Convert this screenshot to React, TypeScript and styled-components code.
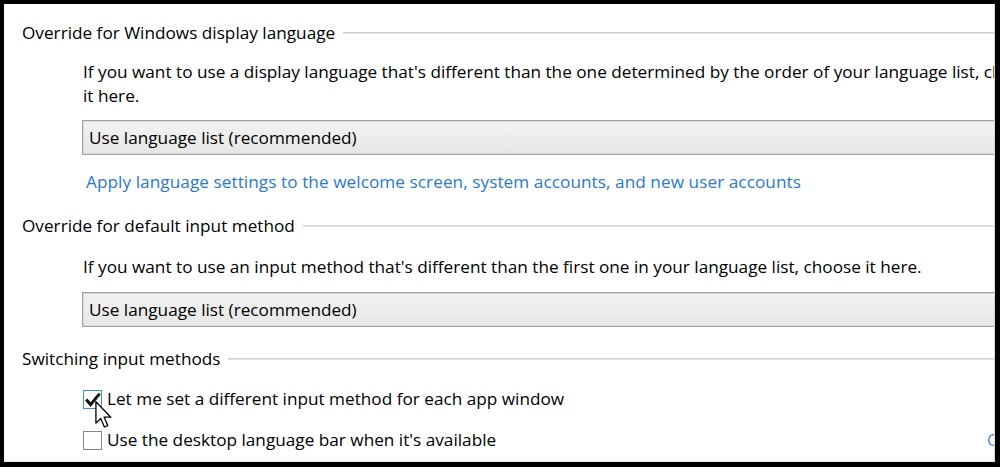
import React from 'react';
import styled, { createGlobalStyle } from 'styled-components';

const GlobalStyle = createGlobalStyle`
	html, body {
		margin: 0;
		padding: 0;
		background: #000;
	}
	* {
		box-sizing: border-box;
	}
`;

const Frame = styled.div`
	width: 1000px;
	height: 467px;
	background: #000;
	padding: 4px 5px 5px 4px;
`;

const Viewport = styled.div`
	position: relative;
	height: 100%;
	background: #fff;
	overflow: hidden;
	border-right: 1px solid #d6d6d6;
	border-bottom: 1px solid #ececec;
`;

const Panel = styled.div`
	width: 1080px;
	padding: 17px 0 0 18px;
	font-family: 'Open Sans', 'Noto Sans', sans-serif;
	font-size: 17.2px;
	line-height: 24px;
	color: #000;
`;

const HeadingRow = styled.div<{ $gap: number }>`
	display: flex;
	align-items: center;
	gap: 8px;
	margin-top: ${p => p.$gap}px;
	white-space: nowrap;
`;

const Rule = styled.div`
	flex: 1;
	height: 2px;
	background: #e2e2e2;
	border-top: 1px solid #d2d2d2;
`;

const Indent = styled.div`
	margin-left: 61px;
`;

const Para = styled.p<{ $gap: number }>`
	margin: ${p => p.$gap}px 0 0 0;
	white-space: nowrap;
`;

const Select = styled.div<{ $gap: number }>`
	display: flex;
	align-items: center;
	height: 35px;
	margin: ${p => p.$gap}px 0 0 -1px;
	padding-left: 6px;
	border: 1px solid #a3a3a3;
	box-shadow: inset 0 0 0 1px #d8d8d8;
	background: linear-gradient(#f3f3f3, #e6e6e6);
	white-space: nowrap;
`;

const Link = styled.a<{ $gap: number }>`
	display: block;
	margin: ${p => p.$gap}px 0 0 3px;
	color: #2a78d6;
	text-decoration: none;
	white-space: nowrap;
	letter-spacing: 0.06px;
	cursor: pointer;
`;

const CheckRow = styled.label<{ $gap: number }>`
	position: relative;
	display: flex;
	align-items: center;
	gap: 5px;
	width: 974px;
	margin-top: ${p => p.$gap}px;
	white-space: nowrap;
`;

const Box = styled.span<{ $focused?: boolean }>`
	display: inline-flex;
	width: 19px;
	height: 19px;
	flex: none;
	background: #fff;
	border: 1px solid ${p => (p.$focused ? '#3d8ee6' : '#858585')};
`;

const SideLink = styled.span`
	width: 70px;
	margin-left: auto;
	color: #5b86c8;
`;

const Pointer = styled.svg`
	position: absolute;
	left: 12px;
	top: 14px;
	width: 17px;
	height: 27px;
	pointer-events: none;
`;

function Heading({ title, gap }: { title: string; gap: number }) {
	return (
		<HeadingRow $gap={gap}>
			<span>{title}</span>
			<Rule />
		</HeadingRow>
	);
}

function Checkbox({ checked, focused }: { checked?: boolean; focused?: boolean }) {
	return (
		<Box $focused={focused}>
			{checked && (
				<svg width='19' height='19' viewBox='0 0 19 19' style={{ overflow: 'visible', margin: -1 }}>
					<path d='M3.2 9.6 L7.6 14.6 L16.6 3.6' fill='none' stroke='#111' strokeWidth='3' strokeLinejoin='miter' />
				</svg>
			)}
		</Box>
	);
}

export default function App() {
	return (
		<>
			<GlobalStyle />
			<Frame>
				<Viewport>
					<Panel>
						<Heading title='Override for Windows display language' gap={0} />
						<Indent>
							<Para $gap={15}>
								If you want to use a display language that's different than the one determined by the order of your language list, choose
								<br />
								it here.
							</Para>
							<Select $gap={12}>Use language list (recommended)</Select>
							<Link $gap={15}>Apply language settings to the welcome screen, system accounts, and new user accounts</Link>
						</Indent>

						<Heading title='Override for default input method' gap={20} />
						<Indent>
							<Para $gap={17}>
								If you want to use an input method that's different than the first one in your language list, choose it here.
							</Para>
							<Select $gap={13}>Use language list (recommended)</Select>
						</Indent>

						<Heading title='Switching input methods' gap={20} />
						<Indent>
							<CheckRow $gap={16}>
								<Checkbox checked focused />
								<span>Let me set a different input method for each app window</span>
								<Pointer viewBox='0 0 13 21'>
									<path
										d='M0.6 0.6 L0.6 17.2 L4.4 13.6 L7.2 20.2 L9.8 19.1 L7 12.6 L12.2 12.6 Z'
										fill='#fff'
										stroke='#000'
										strokeWidth='1'
										strokeLinejoin='round'
									/>
								</Pointer>
							</CheckRow>
							<CheckRow $gap={17}>
								<Checkbox />
								<span>Use the desktop language bar when it's available</span>
								<SideLink>Options</SideLink>
							</CheckRow>
						</Indent>
					</Panel>
				</Viewport>
			</Frame>
		</>
	);
}
